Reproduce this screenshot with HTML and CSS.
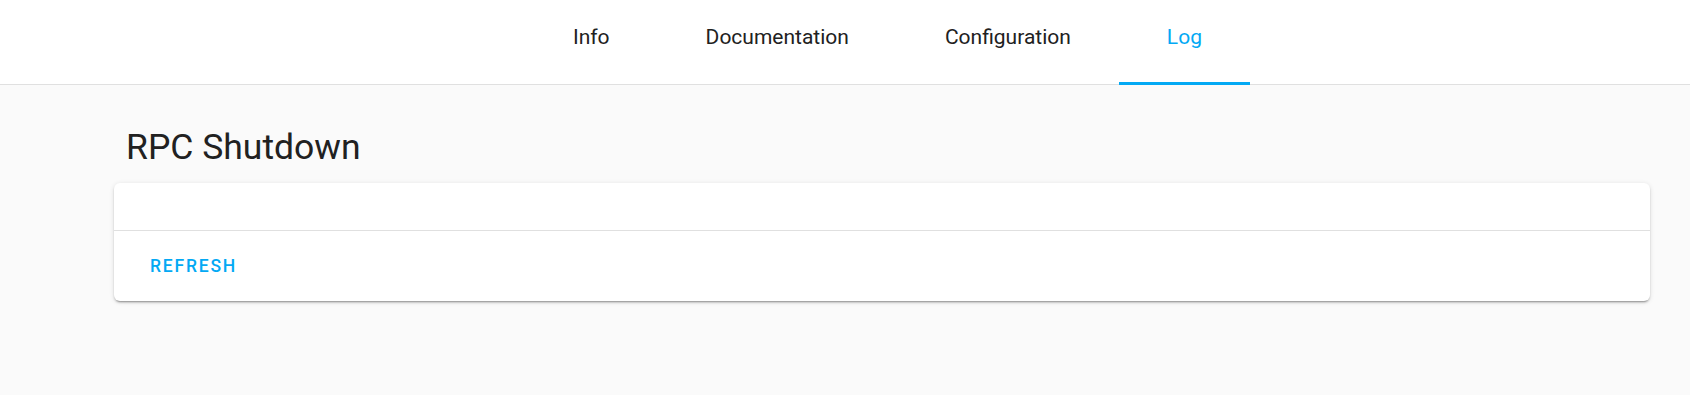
FILE: index.html
```html
<!DOCTYPE html>
<html lang="en">
<head>
  <meta charset="UTF-8">
  <title>RPC Shutdown - Log</title>
  <link rel="stylesheet" href="styles.css">
</head>
<body>
  <header class="tabbar">
    <nav class="tabs">
      <a href="#" class="tab">Info</a>
      <a href="#" class="tab">Documentation</a>
      <a href="#" class="tab">Configuration</a>
      <a href="#" class="tab active">Log</a>
    </nav>
  </header>

  <main class="content">
    <h1 class="title">RPC Shutdown</h1>
    <div class="card">
      <div class="card-body"></div>
      <div class="card-actions">
        <button class="btn">Refresh</button>
      </div>
    </div>
  </main>
</body>
</html>
```

FILE: styles.css
```css
body {
  margin: 0;
  font-family: Roboto, "Noto Sans", sans-serif;
  background: #fafafa;
  color: #212121;
  height: 395px;
}

.tabbar {
  background: white;
  height: 85px;
  border-bottom: 1px solid #e0e0e0;
  box-sizing: border-box;
}
.tabs {
  display: flex;
  height: 100%;
  padding-left: 525px;
}
.tab {
  display: flex;
  align-items: center;
  padding: 0 48px 8px;
  font-size: 21px;
  color: #212121;
  text-decoration: none;
  border-bottom: 3px solid transparent;
  margin-bottom: -1px;
}
.tab.active {
  color: #03a9f4;
  border-bottom-color: #03a9f4;
}

.content {
  padding: 0 40px 0 114px;
}
.title {
  font-size: 35.5px;
  font-weight: 400;
  margin: 0;
  padding: 38px 0 0 12px;
  height: 98px;
  box-sizing: border-box;
  line-height: 48px;
}
.card {
  background: white;
  border-radius: 6px;
  box-shadow: 0 2px 2px rgba(0,0,0,0.14), 0 1px 5px rgba(0,0,0,0.12), 0 3px 1px -2px rgba(0,0,0,0.2);
}
.card-body {
  height: 47px;
  border-bottom: 1px solid #e0e0e0;
}
.card-actions {
  height: 70px;
  display: flex;
  align-items: center;
  padding-left: 26px;
}
.btn {
  background: none;
  border: none;
  font-family: inherit;
  font-size: 17.5px;
  font-weight: 500;
  letter-spacing: 1.8px;
  text-transform: uppercase;
  color: #03a9f4;
  padding: 8px 10px;
  cursor: pointer;
}
```
